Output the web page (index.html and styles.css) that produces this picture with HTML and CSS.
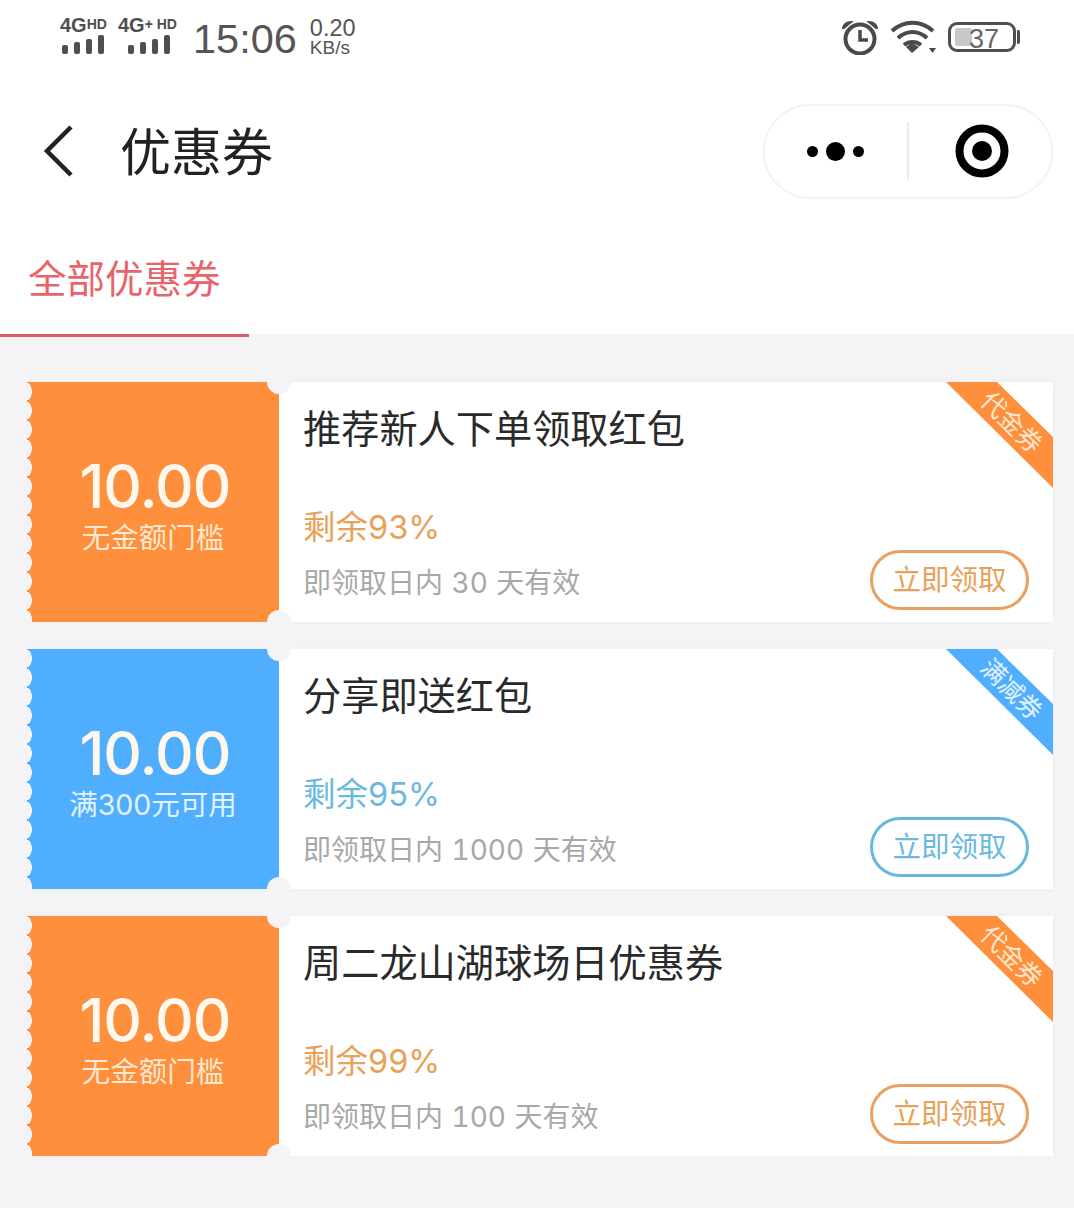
FILE: index.html
```html
<!DOCTYPE html>
<html lang="zh-CN">
<head>
    <meta charset="UTF-8">
    <meta name="viewport" content="width=device-width, initial-scale=1.0">
    <title>优惠券</title>
    <link rel="stylesheet" href="styles.css">
</head>
<body>
    <!-- Status bar -->
    <div class="status">
        <div class="status-left">
            <div class="signal">
                <div class="signal-label">4G<small>HD</small></div>
                <div class="signal-bars"><i class="b1"></i><i class="b2"></i><i class="b3"></i><i class="b4"></i></div>
            </div>
            <div class="signal">
                <div class="signal-label">4G<small>+ HD</small></div>
                <div class="signal-bars indent"><i class="b1"></i><i class="b2"></i><i class="b3"></i><i class="b4"></i></div>
            </div>
            <div class="clock">15:06</div>
            <div class="speed"><span>0.20</span><small>KB/s</small></div>
        </div>
        <div class="status-right">
            <svg class="alarm" width="36" height="36" viewBox="0 0 36 36" fill="none" stroke="#4a4a4a">
                <circle cx="18" cy="20" r="14.5" stroke-width="4"/>
                <path d="M18 11v10h8" stroke-width="3.5"/>
                <path d="M1 9c1-4 4-6 8-6l-7 6zM35 9c-1-4-4-6-8-6l7 6z" fill="#4a4a4a" stroke-width="2"/>
            </svg>
            <svg class="wifi" width="46" height="36" viewBox="0 0 46 36" fill="none" stroke="#4a4a4a" stroke-width="4">
                <path d="M2 12c12-11 29-11 41 0"/>
                <path d="M8 19c9-8 20-8 29 0"/>
                <path d="M14 26c5-4 12-4 17 0"/>
                <path d="M16 28l6-4 7 4-7 6z" fill="#4a4a4a" stroke="none"/>
                <path d="M39 29h7l-3.500 5z" fill="#4a4a4a" stroke="none"/>
            </svg>
            <div class="battery"><div class="battery-fill"></div><span>37</span></div>
            <div class="battery-cap"></div>
        </div>
    </div>

    <!-- Title bar -->
    <header class="titlebar">
        <svg class="back" width="32" height="52" viewBox="0 0 32 52" fill="none" stroke="#222" stroke-width="4.500">
            <path d="M28 2L4 26l24 24"/>
        </svg>
        <h1>优惠券</h1>
        <div class="capsule">
            <div class="capsule-dots"><i></i><i class="big"></i><i></i></div>
            <div class="capsule-line"></div>
            <svg width="54" height="54" viewBox="0 0 54 54">
                <circle cx="27" cy="27" r="22.500" fill="none" stroke="#000" stroke-width="8"/>
                <circle cx="27" cy="27" r="10" fill="#000"/>
            </svg>
        </div>
    </header>

    <!-- Tabs -->
    <nav class="tabs">
        <a class="tab active" href="#">全部优惠券</a>
    </nav>

    <main class="coupons">
        <div class="coupon orange">
            <div class="stub">
                <div class="amount">10.00</div>
                <div class="limit">无金额门槛</div>
            </div>
            <div class="info">
                <h3>推荐新人下单领取红包</h3>
                <div class="remain">剩余93%</div>
                <div class="info-row">
                    <span class="valid">即领取日内 30 天有效</span>
                    <a class="get" href="#">立即领取</a>
                </div>
            </div>
            <div class="ribbon"></div>
            <span class="ribbon-text">代金券</span>
        </div>

        <div class="coupon blue">
            <div class="stub">
                <div class="amount">10.00</div>
                <div class="limit">满300元可用</div>
            </div>
            <div class="info">
                <h3>分享即送红包</h3>
                <div class="remain">剩余95%</div>
                <div class="info-row">
                    <span class="valid">即领取日内 1000 天有效</span>
                    <a class="get" href="#">立即领取</a>
                </div>
            </div>
            <div class="ribbon"></div>
            <span class="ribbon-text">满减券</span>
        </div>

        <div class="coupon orange">
            <div class="stub">
                <div class="amount">10.00</div>
                <div class="limit">无金额门槛</div>
            </div>
            <div class="info">
                <h3>周二龙山湖球场日优惠券</h3>
                <div class="remain">剩余99%</div>
                <div class="info-row">
                    <span class="valid">即领取日内 100 天有效</span>
                    <a class="get" href="#">立即领取</a>
                </div>
            </div>
            <div class="ribbon"></div>
            <span class="ribbon-text">代金券</span>
        </div>
    </main>
</body>
</html>
```

FILE: styles.css
```css
/* Page */
* {
    box-sizing: border-box;
}

html,
body {
    height: 100%;
}

body {
    margin: 0;
    background-color: #f4f4f6;
    color: #222;
    font-family: "Noto Sans CJK SC", "Noto Sans", sans-serif;
    overflow: hidden;
}

/* Status bar */
.status {
    height: 76px;
    background-color: #fff;
    display: flex;
    justify-content: space-between;
    align-items: flex-start;
    padding: 14px 54px 0 60px;
    color: #4f4f4f;
    font-family: "Liberation Sans", sans-serif;
}

.status-left {
    display: flex;
    align-items: flex-start;
}

.signal {
    width: 58px;
}

.signal-label {
    font-size: 20px;
    line-height: 20px;
    font-weight: bold;
    white-space: nowrap;
}

.signal-label small {
    font-size: 14px;
    vertical-align: 3px;
}

.signal-bars {
    display: flex;
    align-items: flex-end;
    gap: 6px;
    height: 19px;
    padding-left: 2px;
}

.signal-bars.indent {
    padding-left: 10px;
}

.signal-bars i {
    width: 6px;
    background-color: #4f4f4f;
    border-radius: 2px;
}

.signal-bars .b1 { height: 9px; }
.signal-bars .b2 { height: 12px; }
.signal-bars .b3 { height: 15px; }
.signal-bars .b4 { height: 19px; }

.clock {
    font-size: 41.500px;
    line-height: 50px;
    margin-left: 17px;
    color: #555;
}

.speed {
    display: flex;
    flex-direction: column;
    margin-left: 13px;
    margin-top: 4px;
    line-height: 20px;
    color: #555;
}

.speed span {
    font-size: 23.500px;
}

.speed small {
    font-size: 19px;
}

.status-right {
    display: flex;
    align-items: center;
    margin-top: 5px;
}

.wifi {
    margin-left: 12px;
}

.battery {
    position: relative;
    width: 68px;
    height: 30px;
    margin-left: 12px;
    border: 3px solid #4f4f4f;
    border-radius: 9px;
    padding: 2px;
    text-align: center;
    font-size: 27px;
    line-height: 24px;
    color: #666;
}

.battery span {
    position: relative;
    margin-left: 4px;
}

.battery-fill {
    position: absolute;
    top: 3px;
    left: 4px;
    bottom: 3px;
    width: 17px;
    background-color: #c8c8c8;
    border-radius: 2px;
}

.battery-cap {
    width: 3px;
    height: 14px;
    margin-left: 1px;
    background-color: #4f4f4f;
    border-radius: 0 2px 2px 0;
}

/* Title bar */
.titlebar {
    height: 150px;
    background-color: #fff;
    display: flex;
    align-items: center;
    padding: 0 21px 0 43px;
}

.titlebar h1 {
    margin: -4px 0 0 45px;
    font-size: 51px;
    font-weight: normal;
    line-height: 60px;
    color: #222;
}

.capsule {
    margin-left: auto;
    width: 290px;
    height: 95px;
    border: 2px solid #f3f3f3;
    border-radius: 48px;
    display: flex;
    align-items: center;
    padding-left: 42px;
}

.capsule-dots {
    display: flex;
    align-items: center;
    gap: 8px;
    width: 100px;
}

.capsule-dots i {
    width: 11px;
    height: 11px;
    border-radius: 50%;
    background-color: #000;
}

.capsule-dots i.big {
    width: 19px;
    height: 19px;
}

.capsule-line {
    width: 2px;
    height: 58px;
    background-color: #ececec;
}

.capsule svg {
    margin-left: 46px;
}

/* Tabs */
.tabs {
    height: 108px;
    background-color: #fff;
    display: flex;
}

.tab {
    width: 249px;
    height: 111px;
    padding: 25px 0 0 28px;
    font-size: 38.500px;
    line-height: 50px;
    color: #e8646a;
    text-decoration: none;
}

.tab.active {
    border-bottom: 3px solid #dc5a64;
}

/* Coupon list */
.coupons {
    display: flex;
    flex-direction: column;
    gap: 27px;
    padding: 48px 21px 0 30px;
}

.coupon {
    position: relative;
    height: 240px;
    display: flex;
    background-color: #fff;
    box-shadow: 0 0 6px rgba(0, 0, 0, 0.03);
}

.orange {
    --main: #fe8f3c;
    --soft: #e8a158;
    --line: #eba061;
    --light: #ffe8cf;
}

.blue {
    --main: #50aefe;
    --soft: #6bb9e0;
    --line: #68b8dd;
    --light: #e2f2ff;
}

.stub {
    position: relative;
    width: 249px;
    background-color: var(--main);
    display: flex;
    flex-direction: column;
    align-items: center;
    justify-content: center;
    padding: 5px 3px 0 0;
}

/* zigzag on the left side */
.stub::before {
    content: "";
    position: absolute;
    top: 0;
    bottom: 0;
    left: -3px;
    width: 6px;
    background-image: radial-gradient(ellipse 5px 9px at 0 50%, #f4f4f6 92%, var(--main) 100%);
    background-size: 6px 19px;
}

/* top and bottom notches */
.coupon::before,
.coupon::after {
    content: "";
    position: absolute;
    left: 237px;
    width: 24px;
    height: 24px;
    border-radius: 50%;
    background-color: #f4f4f6;
    z-index: 1;
}

.coupon::before {
    top: -12px;
}

.coupon::after {
    bottom: -12px;
}

.amount {
    margin-left: 4px;
    font-family: "Inter", sans-serif;
    font-size: 60px;
    font-weight: 500;
    line-height: 66px;
    letter-spacing: -1px;
    color: #fff8ef;
}

.limit {
    font-family: "Inter", "Noto Sans CJK SC", sans-serif;
    font-size: 28.500px;
    line-height: 38px;
    color: var(--light);
}

.info {
    flex: 1;
    padding: 20px 24px 0 24px;
}

.info h3 {
    margin: 0;
    font-size: 38.200px;
    font-weight: normal;
    line-height: 50px;
    color: #2a2a2a;
}

.remain {
    margin-top: 53px;
    font-family: "Inter", "Noto Sans CJK SC", sans-serif;
    font-size: 32.500px;
    line-height: 45px;
    color: var(--soft);
}

.info-row {
    display: flex;
    justify-content: space-between;
    align-items: center;
    height: 60px;
}

.valid {
    padding-top: 2px;
    font-family: "Inter", "Noto Sans CJK SC", sans-serif;
    font-size: 28px;
    font-variant-numeric: tabular-nums;
    word-spacing: 1px;
    color: #a8a8a8;
}

.get {
    width: 159px;
    height: 60px;
    border: 3px solid var(--line);
    border-radius: 30px;
    font-size: 28.500px;
    line-height: 50px;
    text-align: center;
    color: var(--soft);
    text-decoration: none;
}

/* Corner ribbon */
.ribbon {
    position: absolute;
    top: 0;
    right: 0;
    width: 107px;
    height: 106px;
    background-color: var(--main);
    clip-path: polygon(0 0, 51px 0, 100% 55px, 100% 100%);
}

.ribbon-text {
    position: absolute;
    top: 22px;
    right: 0;
    width: 80px;
    font-size: 25px;
    line-height: 34px;
    text-align: center;
    white-space: nowrap;
    color: var(--light);
    transform: rotate(45deg);
}
```
